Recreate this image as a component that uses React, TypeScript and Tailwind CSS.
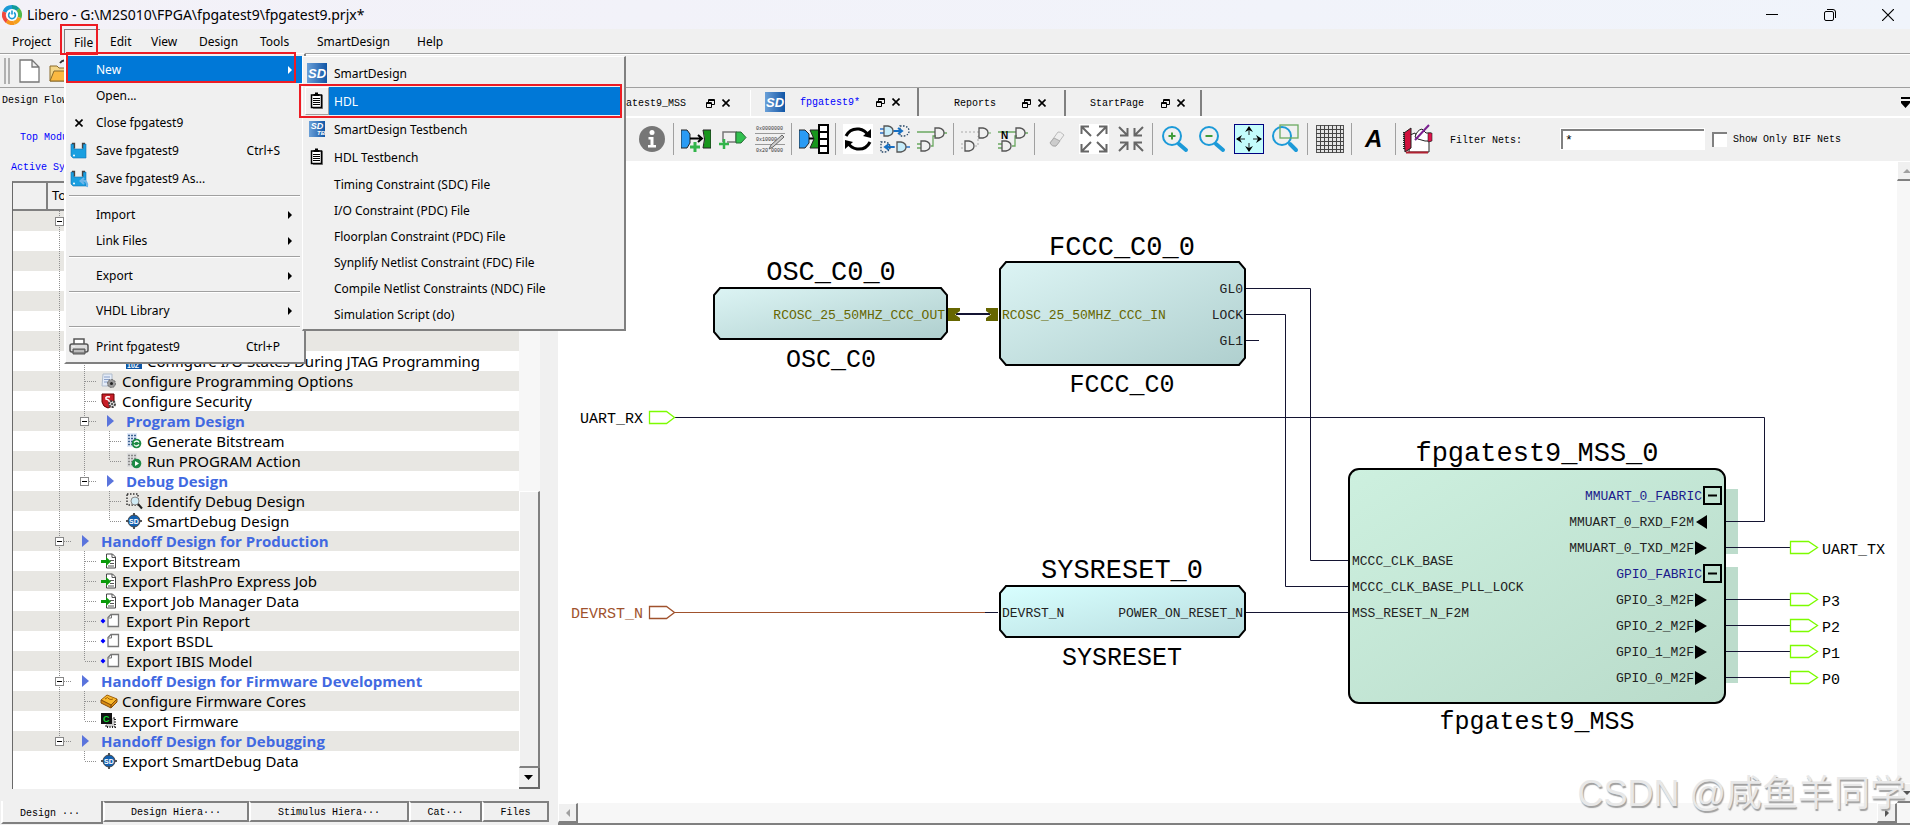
import { useState } from 'react'
import type { ReactNode } from 'react'

type Guide = 'blank' | 'line' | 'tee' | 'elbow' | 'box' | 'boxEnd' | 'boxTop'
type TreeIcon = 'io' | 'options' | 'security' | 'generate' | 'run' | 'identify' | 'smartdebug' | 'export' | 'page' | 'cores' | 'firmware'

interface TreeRow {
  guides: Guide[]
  label?: string
  group?: boolean
  icon?: TreeIcon
}

interface MenuEntry {
  label: string
  icon?: ReactNode
  shortcut?: string
  tall?: boolean
  arrow?: boolean
  separator?: boolean
}

const MONO = "font-['Liberation_Mono',monospace]"

const emptyRow: TreeRow = { guides: ['line'] }

const treeRows: TreeRow[] = [
  { guides: ['boxTop'] },
  emptyRow,
  emptyRow,
  emptyRow,
  emptyRow,
  emptyRow,
  emptyRow,
  { guides: ['line', 'line', 'blank'], label: 'Configure I/O States During JTAG Programming', icon: 'io' },
  { guides: ['line', 'tee'], label: 'Configure Programming Options', icon: 'options' },
  { guides: ['line', 'tee'], label: 'Configure Security', icon: 'security' },
  { guides: ['line', 'box'], label: 'Program Design', group: true },
  { guides: ['line', 'line', 'tee'], label: 'Generate Bitstream', icon: 'generate' },
  { guides: ['line', 'line', 'elbow'], label: 'Run PROGRAM Action', icon: 'run' },
  { guides: ['line', 'boxEnd'], label: 'Debug Design', group: true },
  { guides: ['line', 'blank', 'tee'], label: 'Identify Debug Design', icon: 'identify' },
  { guides: ['line', 'blank', 'elbow'], label: 'SmartDebug Design', icon: 'smartdebug' },
  { guides: ['box'], label: 'Handoff Design for Production', group: true },
  { guides: ['line', 'tee'], label: 'Export Bitstream', icon: 'export' },
  { guides: ['line', 'tee'], label: 'Export FlashPro Express Job', icon: 'export' },
  { guides: ['line', 'tee'], label: 'Export Job Manager Data', icon: 'export' },
  { guides: ['line', 'tee'], label: 'Export Pin Report', icon: 'page' },
  { guides: ['line', 'tee'], label: 'Export BSDL', icon: 'page' },
  { guides: ['line', 'elbow'], label: 'Export IBIS Model', icon: 'page' },
  { guides: ['box'], label: 'Handoff Design for Firmware Development', group: true },
  { guides: ['line', 'tee'], label: 'Configure Firmware Cores', icon: 'cores' },
  { guides: ['line', 'elbow'], label: 'Export Firmware', icon: 'firmware' },
  { guides: ['boxEnd'], label: 'Handoff Design for Debugging', group: true },
  { guides: ['blank', 'elbow'], label: 'Export SmartDebug Data', icon: 'smartdebug' },
]

function Logo() {
  return (
    <svg className="h-5 w-5" viewBox="0 0 20 20" fill="none" strokeWidth="4">
      <path d="M10 2 A8 8 0 0 0 2.5 7" stroke="#1b9ad6" />
      <path d="M2.5 7 A8 8 0 0 0 5 16.3" stroke="#f0483e" />
      <path d="M5 16.3 A8 8 0 0 0 12 17.8" stroke="#f7941d" />
      <path d="M12 17.8 A8 8 0 0 0 17.5 12.5" stroke="#f5a11c" />
      <path d="M17.5 12.5 A8 8 0 0 0 16 4.5" stroke="#52b848" />
      <path d="M16 4.5 A8 8 0 0 0 10 2" stroke="#0f9a9a" />
      <circle cx="10" cy="10" r="5.5" fill="#fff" />
      <path d="M8 7.5a3.4 3.4 0 1 0 4 0M10 5.5v4" stroke="#1b9ad6" strokeWidth="1.6" />
    </svg>
  )
}

function SdIcon({ small }: { small?: boolean }) {
  return (
    <span
      className={`flex flex-col items-center justify-center bg-gradient-to-r from-[#6aa0d8] to-[#0d56a6] font-['Liberation_Sans',sans-serif] font-bold italic text-white ${
        small ? 'h-4 w-4 text-[9px] leading-[8px]' : 'h-5 w-5 text-[13px] leading-none'
      }`}
    >
      <span>SD</span>
      {small && <span className="self-end text-[6px] leading-[6px]">TB</span>}
    </span>
  )
}

function ClipboardIcon() {
  return (
    <svg className="h-[18px] w-[14px]" viewBox="0 0 14 18">
      <path d="M3 3h10v14h-10z" fill="#888" />
      <path d="M1.500 3h10v12.500h-10z" fill="#fff" stroke="#000" strokeWidth="1.500" />
      <path d="M3.500 2h1.500V.5h3V2h1.500v2h-6z" fill="#000" />
      <path d="M3 6.500h7M3 8.500h7M3 10.500h7M3 12.500h7" stroke="#000" />
    </svg>
  )
}

function SaveIcon({ as }: { as?: boolean }) {
  return (
    <svg className="h-[18px] w-5" viewBox="0 0 20 18">
      <path d="M2 2h3v5h9V2h3v14H4l-2-2z" fill="#1a9fe0" stroke="#1273b4" strokeWidth=".6" />
      <path d="M3 1.500h2.500v5M16 1.500h-2.500v5" fill="none" stroke="#444" strokeWidth="1.300" />
      <circle cx="5" cy="13.500" r="1" fill="#fff" />
      {as && <path d="M13 11q6-1 5 6M15 8l-3.500 3 3.500 3" fill="none" stroke="#6fb5e8" strokeWidth="2" />}
    </svg>
  )
}

function PrinterIcon() {
  return (
    <svg className="h-[18px] w-5" viewBox="0 0 20 18" fill="none" stroke="#555">
      <path d="M5 7V1h10v6" fill="#fff" strokeWidth="1.500" />
      <rect x="1" y="6" width="18" height="8" rx="2" fill="#ddd" strokeWidth="1.500" />
      <path d="M4 11h12v5H4z" fill="#888" />
      <path d="M5 13h10M3 8.500h3" stroke="#eee" />
    </svg>
  )
}

const fileMenu: MenuEntry[] = [
  { label: 'Open...' },
  { label: 'Close fpgatest9', tall: true, icon: <svg className="h-2 w-2" viewBox="0 0 8 8"><path d="M.5.5l7 7M7.500.5l-7 7" stroke="#000" strokeWidth="1.600" /></svg> },
  { label: 'Save fpgatest9', tall: true, shortcut: 'Ctrl+S', icon: <SaveIcon /> },
  { label: 'Save fpgatest9 As...', tall: true, icon: <SaveIcon as /> },
  { label: 'Import', arrow: true, separator: true },
  { label: 'Link Files', arrow: true },
  { label: 'Export', arrow: true, separator: true },
  { label: 'VHDL Library', arrow: true, separator: true },
  { label: 'Print fpgatest9', tall: true, shortcut: 'Ctrl+P', separator: true, icon: <PrinterIcon /> },
]

const newMenu: MenuEntry[] = [
  { label: 'SmartDesign', tall: true, icon: <SdIcon /> },
  { label: 'HDL', tall: true, icon: <ClipboardIcon /> },
  { label: 'SmartDesign Testbench', tall: true, icon: <SdIcon small /> },
  { label: 'HDL Testbench', tall: true, icon: <ClipboardIcon /> },
  { label: 'Timing Constraint (SDC) File' },
  { label: 'I/O Constraint (PDC) File' },
  { label: 'Floorplan Constraint (PDC) File' },
  { label: 'Synplify Netlist Constraint (FDC) File' },
  { label: 'Compile Netlist Constraints (NDC) File' },
  { label: 'Simulation Script (do)' },
]

function Arrow({ className }: { className: string }) {
  return (
    <svg className={`h-2 w-1 ${className}`} viewBox="0 0 4 8">
      <path d="M0 0l4 4-4 4z" fill="currentColor" />
    </svg>
  )
}

function NewSubmenu() {
  return (
    <ul role="menu" className="absolute top-0 left-full -ml-0.5 w-[324px] border-t border-r-2 border-b-2 border-l border-t-white border-r-[#808080] border-b-[#808080] border-l-white bg-[#f0f0f0] py-0.5 text-black">
      {newMenu.map((item) => {
        const active = item.label === 'HDL'
        return (
          <li key={item.label} className="relative">
            <button role="menuitem" className={`flex w-full items-center text-left ${item.tall ? 'h-7' : 'h-[26px]'}`}>
              <span className={`ml-0.5 flex h-full w-6 items-center justify-center ${active ? 'border border-t-white border-r-[#a0a0a0] border-b-[#a0a0a0] border-l-white' : ''}`}>
                {item.icon}
              </span>
              <span className={`mr-0.5 flex h-full flex-1 items-center pt-0.5 pl-[5px] ${active ? 'bg-[#0078d7] text-white' : ''}`}>{item.label}</span>
            </button>
            {active && <span className="pointer-events-none absolute -inset-y-[3px] right-0.5 -left-1 border-2 border-[#ed1c24]" />}
          </li>
        )
      })}
    </ul>
  )
}

function FileMenu() {
  return (
    <ul role="menu" className="absolute top-6 left-0 z-20 w-[242px] border-t border-r-2 border-b-2 border-l-2 border-t-white border-r-[#808080] border-b-[#808080] border-l-white bg-[#f0f0f0] pt-0.5 pb-px">
      <li className="relative">
        <button role="menuitem" className="flex h-[27px] w-full items-center bg-[#0078d7] pr-3 pl-[30px] text-white">
          New
          <Arrow className="ml-auto" />
        </button>
        <span className="pointer-events-none absolute -top-1 right-2 bottom-0 left-0 z-10 border-2 border-[#ed1c24]" />
        <NewSubmenu />
      </li>
      {fileMenu.map((item) => (
        <li key={item.label}>
          {item.separator && <div className="mt-0.5 mr-1 mb-[5px] ml-[3px] border-t border-b border-t-[#a0a0a0] border-b-white" />}
          <button role="menuitem" className={`flex w-full items-center pr-3 text-left ${item.tall ? 'h-7' : 'h-[26px]'}`}>
            <span className="flex w-[30px] items-center justify-center pr-1">{item.icon}</span>
            <span>{item.label}</span>
            {item.shortcut && <span className="mr-3 ml-auto">{item.shortcut}</span>}
            {item.arrow && <Arrow className="ml-auto" />}
          </button>
        </li>
      ))}
    </ul>
  )
}

function MenuBar() {
  const [open, setOpen] = useState(true)
  return (
    <nav className="flex h-[25px] shrink-0 items-stretch border-b border-[#a0a0a0] text-[12px]">
      <button className="w-16 pt-0.5 pl-3 text-left">Project</button>
      <div className="relative w-9">
        <button onClick={() => setOpen(!open)} className="h-full w-full border-t border-l border-[#808080] pt-0.5 pl-[9px] text-left">
          File
        </button>
        {open && <FileMenu />}
        <span className="pointer-events-none absolute -top-[5px] right-0.5 -bottom-[2px] -left-1 z-30 border-2 border-[#ed1c24]" />
      </div>
      <button className="w-[41px] pt-0.5 pl-2.5 text-left">Edit</button>
      <button className="w-12 pt-0.5 pl-2.5 text-left">View</button>
      <button className="w-[61px] pt-0.5 pl-2.5 text-left">Design</button>
      <button className="w-[57px] pt-0.5 pl-2.5 text-left">Tools</button>
      <button className="w-[100px] pt-0.5 pl-2.5 text-left">SmartDesign</button>
      <button className="pt-0.5 pl-2.5 text-left">Help</button>
    </nav>
  )
}

function GuideCell({ kind }: { kind: Guide }) {
  const boxed = kind === 'box' || kind === 'boxEnd' || kind === 'boxTop'
  return (
    <svg className="h-5 w-[25px] shrink-0" viewBox="0 0 25 20" fill="none" stroke="#909090" strokeDasharray="1 1">
      {(kind === 'line' || kind === 'tee' || kind === 'box') && <path d="M12.500 0V20" />}
      {(kind === 'elbow' || kind === 'boxEnd') && <path d="M12.500 0V10" />}
      {kind === 'boxTop' && <path d="M12.500 0V20" />}
      {kind !== 'line' && kind !== 'blank' && <path d="M13 10.500H25" />}
      {boxed && (
        <g strokeDasharray="none">
          <rect x="8.500" y="6.500" width="8" height="8" fill="#fff" stroke="#888" />
          <path d="M10 10.500h5" stroke="#000" />
        </g>
      )}
    </svg>
  )
}

function RowIcon({ kind }: { kind: TreeIcon }) {
  return (
    <svg className="h-4 w-4 shrink-0" viewBox="0 0 16 16" fill="none">
      {kind === 'io' && (
        <>
          <rect y="2" width="16" height="14" fill="#0d56a6" />
          <text x="1" y="15" fontSize="7" fontWeight="bold" fill="#fff" fontFamily="Liberation Sans">10Z</text>
        </>
      )}
      {kind === 'options' && (
        <>
          <path d="M2 1h9v12H1z" fill="#e4ecf8" stroke="#b0bccc" />
          <path d="M3 4h6M3 6.500h6M3 9h4" stroke="#8aa0c8" />
          <circle cx="10.500" cy="10.500" r="4" fill="#999" stroke="#666" strokeDasharray="2 1" />
          <circle cx="10.500" cy="10.500" r="1.500" fill="#222" />
        </>
      )}
      {kind === 'security' && (
        <>
          <path d="M1 1h12v8q-1 5-6 6-5-1-6-6z" fill="#c81e28" stroke="#600" />
          <path d="M9 4q-5-1-4 2 4 1 3 3" stroke="#fff" strokeWidth="1.500" />
          <circle cx="11" cy="11" r="3" fill="#ddd" stroke="#444" strokeWidth="2" strokeDasharray="2 1" />
          <circle cx="11" cy="11" r="1" fill="#333" />
        </>
      )}
      {(kind === 'generate' || kind === 'run') && (
        <>
          <rect x="1" y="0" width="10" height="14" fill={kind === 'run' ? '#ddd' : '#dfe8f8'} />
          <path d="M2 2.500h8M2 5.500h8M2 8.500h8M2 11.500h4" stroke={kind === 'run' ? '#888' : '#3d6190'} strokeDasharray="2 1" strokeWidth="1.500" />
          <circle cx="10.500" cy="10.500" r="4.800" fill="#1c8a44" />
          {kind === 'run' ? <path d="M9 8l4 2.500L9 13z" fill="#fff" /> : <path d="M8 9.500q3-3 5 0M13 11.500q-3 3-5 0" stroke="#fff" strokeWidth="1.300" />}
        </>
      )}
      {kind === 'identify' && (
        <>
          <path d="M1 1h11v11H1z" stroke="#333" strokeWidth="1.500" strokeDasharray="1.500 1.500" />
          <circle cx="9" cy="8" r="4" fill="#cfeaf4" stroke="#888" />
          <path d="M12 11l4 4.500" stroke="#222" strokeWidth="2" />
        </>
      )}
      {kind === 'smartdebug' && (
        <>
          <path d="M8 0v16M0 8h16" stroke="#555" strokeWidth="2" />
          <circle cx="8" cy="8" r="6" fill="#1260b0" stroke="#444" />
          <text x="3" y="11" fontSize="7" fontWeight="bold" fill="#fff" fontFamily="Liberation Sans">SD</text>
        </>
      )}
      {kind === 'export' && (
        <>
          <path d="M5.500 1h6l3 3v11h-9z" fill="#fff" stroke="#444" />
          <path d="M11 1v3.500h3.500M9 7.500h4M9 10.500h4M7 13h6" stroke="#555" />
          <path d="M0 7h5V4l5 4.500L5 13v-3H0z" fill="#0a9a0a" />
        </>
      )}
      {kind === 'page' && (
        <>
          <path d="M-.5 8L2 5.500 4.500 8 2 10.500z" fill="#00f" />
          <path d="M10 1.500h7.500v12H7v-9z" fill="#fff" stroke="#777" strokeWidth="1.300" />
          <path d="M10.500 2v3H7.500" stroke="#777" />
        </>
      )}
      {kind === 'cores' && (
        <>
          <path d="M0 7l6-5 10 4-6 6z" fill="#f8b82c" stroke="#a06008" />
          <path d="M0 7v3l10 5v-3zM10 12l6-6v3l-6 6z" fill="#d88a10" stroke="#8a5008" />
          <path d="M4 6q3-3 4 0 2 1 4 0" stroke="#a06008" />
        </>
      )}
      {kind === 'firmware' && (
        <>
          <path d="M5 5h9v9H5z" fill="#ccc" stroke="#222" strokeWidth="2" strokeDasharray="1 1.500" />
          <rect width="11" height="11" fill="#111" />
          <text x="2" y="9" fontSize="9" fontWeight="bold" fill="#1d3" fontFamily="Liberation Sans">C</text>
        </>
      )}
    </svg>
  )
}

function DesignTree() {
  return (
    <div className="mx-3 flex flex-1 flex-col border-t-2 border-l border-t-[#808080] border-l-[#696969] bg-white">
      <div className="flex h-7 shrink-0 border-b-2 border-[#808080] bg-[#f0f0f0] text-[13px]">
        <span className="w-[35px] border-r-2 border-[#808080]" />
        <span className="flex items-center pl-1">Tool</span>
      </div>
      <div className="flex flex-1">
        <ul className="flex-1">
          {treeRows.map((row, i) => (
            <li key={i} className={`flex h-5 items-center pl-[34px] text-[15px] leading-5 whitespace-nowrap ${i % 2 === 0 ? 'bg-[#e8e7e3]' : 'bg-white'}`}>
              {row.guides.map((kind, j) => (
                <GuideCell key={j} kind={kind} />
              ))}
              {row.group && (
                <svg className="mr-[11px] ml-2.5 h-3 w-2 shrink-0" viewBox="0 0 8 12">
                  <path d="M0 0l7 6-7 6z" fill="#5a74dc" />
                </svg>
              )}
              {row.icon && (
                <span className={`ml-1 shrink-0 [&>svg]:overflow-visible ${row.icon === 'page' ? 'mr-[9px]' : 'mr-[5px]'}`}>
                  <RowIcon kind={row.icon} />
                </span>
              )}
              <span className={row.group ? "font-['Open_Sans',sans-serif] font-bold text-[#4169e1]" : ''}>{row.label}</span>
            </li>
          ))}
        </ul>
        <div className="flex w-[21px] flex-col bg-[#f7f7f7]">
          <div className="h-[280px]" />
          <div className="flex-1 border-t border-r-2 border-b-2 border-l border-t-white border-r-[#808080] border-b-[#808080] border-l-white bg-[#f0f0f0]" />
          <button aria-label="Scroll down" className="flex h-[21px] items-center justify-center border-r-2 border-b-2 border-[#696969] bg-[#f0f0f0]">
            <svg className="h-[5px] w-[9px]" viewBox="0 0 9 5"><path d="M0 0h9L4.500 5z" /></svg>
          </button>
        </div>
      </div>
    </div>
  )
}

function LeftDock() {
  const tabs = [
    { label: 'Design Hiera···', width: 'w-[146px]' },
    { label: 'Stimulus Hiera···', width: 'w-40' },
    { label: 'Cat···', width: 'w-[73px]' },
    { label: 'Files', width: 'w-[67px]' },
  ]
  return (
    <aside className="flex w-[552px] shrink-0 flex-col">
      <h2 className={`h-[42px] pt-[5px] pl-0.5 text-[10px] ${MONO}`}>Design Flow</h2>
      <p className={`h-[30px] pl-5 text-[10px] text-[#0000ff] ${MONO}`}>Top Module</p>
      <p className={`h-[21px] pl-[11px] text-[10px] text-[#0000ff] ${MONO}`}>Active Synthesis</p>
      <DesignTree />
      <div className={`mt-3 flex h-6 items-start text-[10px] ${MONO}`}>
        <button className="ml-px h-[23px] w-[102px] border-r-2 border-b-2 border-l-2 border-r-[#808080] border-b-[#808080] border-l-white pt-1 pr-1">Design ···</button>
        {tabs.map((tab) => (
          <button key={tab.label} className={`h-[21px] border-2 border-t-[#808080] border-r-[#808080] border-b-[#808080] border-l-white pt-0.5 ${tab.width}`}>
            {tab.label}
          </button>
        ))}
      </div>
    </aside>
  )
}

function DetachIcon() {
  return (
    <svg className="h-[9px] w-[9px]" viewBox="0 0 9 9" fill="#f0f0f0" stroke="#000">
      <path d="M2.500.5h6v5h-6zM2.500 1.500h6" />
      <path d="M.5 3.500h5v5h-5zM.5 4.500h5" />
    </svg>
  )
}

function TabButtons() {
  return (
    <span className="flex items-center gap-[7px]">
      <button aria-label="Detach"><DetachIcon /></button>
      <button aria-label="Close">
        <svg className="h-2 w-2" viewBox="0 0 8 8"><path d="M.5.5l7 7M7.500.5l-7 7" stroke="#000" strokeWidth="1.600" /></svg>
      </button>
    </span>
  )
}

function EditorTabs() {
  return (
    <div className={`flex h-[29px] shrink-0 items-stretch border-b border-white text-[10px] ${MONO}`}>
      <div className="mt-0.5 flex w-[193px] items-center gap-5 border-r border-white pl-[50px]">
        fpgatest9_MSS <TabButtons />
      </div>
      <div className="flex w-[168px] items-center border-r-2 border-[#808080] pl-3.5">
        <SdIcon />
        <span className="mr-4 ml-[15px] text-[#0000ff]">fpgatest9*</span>
        <TabButtons />
      </div>
      <div className="mt-0.5 flex w-[147px] items-center border-r-2 border-[#808080] pl-[35px]">
        <span className="mr-[26px]">Reports</span>
        <TabButtons />
      </div>
      <div className="mt-0.5 flex w-[136px] items-center border-r-2 border-[#808080] pl-6">
        <span className="mr-[17px]">StartPage</span>
        <TabButtons />
      </div>
      <button aria-label="Tab list" className="ml-auto">
        <svg className="h-[11px] w-[9px]" viewBox="0 0 9 11"><path d="M0 0h9v2H0zM0 4h9v2L4.500 11 0 6z" /></svg>
      </button>
    </div>
  )
}

function Tool({ label, children }: { label: string; children: ReactNode }) {
  return (
    <button aria-label={label} className="flex w-[37px] shrink-0 items-center justify-center">
      <svg className="h-[30px] w-[30px]" viewBox="0 0 30 30" fill="none">{children}</svg>
    </button>
  )
}

function Divider() {
  return <span className="mx-[3px] h-8 w-px shrink-0 bg-[#a0a0a0]" />
}

function Gate({ x, y, fill = 'none', dashed }: { x: number; y: number; fill?: string; dashed?: boolean }) {
  return <path d={`M${x} ${y}h4q5 1 5 5t-5 5h-4z`} fill={fill} stroke={dashed ? '#246' : '#555'} strokeWidth="1.300" strokeDasharray={dashed ? '1.500 1.500' : undefined} />
}

function CanvasToolbar() {
  return (
    <div className={`flex h-[44px] shrink-0 items-center border-t border-white pb-px pl-[75px] text-[10px] ${MONO}`}>
      <Tool label="Info">
        <circle cx="15" cy="15" r="13" fill="#767676" />
        <circle cx="15" cy="8.500" r="2.500" fill="#fff" />
        <path d="M11.500 13h5v8h2.500v2.500h-8V21h2.500v-5.500h-2z" fill="#fff" />
      </Tool>
      <Divider />
      <Tool label="Connect">
        <path d="M0 6h6l3 4v9l-3 5H0z" fill="#2a9bf4" stroke="#222" />
        <path d="M22 6h8v18h-8q3-9 0-18z" fill="#18961c" stroke="#222" />
        <path d="M9 14.500h12M17 11l4 3.500-4 3.500" stroke="#000" strokeWidth="2" />
        <path d="M14 18v10M9 23h10" stroke="#32b44a" strokeWidth="3" />
      </Tool>
      <Tool label="Add port">
        <path d="M5 18V8h13v10H9" stroke="#777" strokeWidth="1.500" />
        <path d="M18 8h5l5 5.500-5 5.500h-5z" fill="#30c04e" stroke="#276a35" />
        <path d="M6 15v10M1 20h10" stroke="#32b44a" strokeWidth="2.500" />
      </Tool>
      <Tool label="Memory map">
        <text x="1" y="6" fontSize="5" fill="#333">0x0000000</text>
        <text x="1" y="17" fontSize="5" fill="#333">0x10000</text>
        <text x="1" y="28" fontSize="5" fill="#333">0x20 0000</text>
        <path d="M0 9.500h30M0 20.500h30" stroke="#999" />
        <path d="M14 25l2-4 11-10 2 2-11 10z" fill="#ccc" stroke="#666" />
      </Tool>
      <Divider />
      <Tool label="Bus interface">
        <path d="M0 6h6l4 4v9l-4 5H0z" fill="#2a9bf4" stroke="#222" />
        <path d="M10 14.500h5" stroke="#000" strokeWidth="2" />
        <path d="M11 6h9v18h-9l4-9z" fill="#18961c" stroke="#222" />
        <path d="M20 1h9v28h-9zM20 8h9M20 15h9M20 22h9" fill="#fff" stroke="#000" strokeWidth="2" />
      </Tool>
      <Divider />
      <Tool label="Refresh">
        <rect width="30" height="30" fill="#fff" />
        <path d="M3 12q4-8 13-7 6 1 9 6M27 18q-4 8-13 7-6-1-9-6" stroke="#000" strokeWidth="3" />
        <path d="M28 5v9l-8-2zM2 25v-9l8 2z" fill="#000" />
      </Tool>
      <Tool label="Reconnect gates">
        <path d="M0 5h4M0 9h4M13 7h6M26 23h4M9 23h6" stroke="#2a72c8" strokeWidth="1.500" />
        <Gate x={4} y={2} fill="#c6ecfa" />
        <Gate x={20} y={2} dashed />
        <path d="M14 7h7M18 4l4 3-4 3M14 23H6M9 20l-4 3 4 3" stroke="#1670c4" strokeWidth="2" />
        <Gate x={17} y={18} fill="#c6ecfa" />
        <Gate x={1} y={18} dashed />
      </Tool>
      <Tool label="Route nets">
        <path d="M0 8h18M14 22h2V12h3M0 20h4M0 24h4M27 9h3" stroke="#6aa860" strokeWidth="1.300" />
        <Gate x={18} y={4} />
        <Gate x={4} y={17} />
      </Tool>
      <Divider />
      <Tool label="Hide nets">
        <path d="M0 8h18M14 22h3V12h2M0 20h4M0 24h4" stroke="#aaa" strokeDasharray="2 2" />
        <path d="M27 9h3" stroke="#6aa860" />
        <Gate x={18} y={4} />
        <Gate x={4} y={17} />
      </Tool>
      <Tool label="Name nets">
        <path d="M0 8h18M14 22h3V12h2M0 20h4M0 24h4M27 9h3" stroke="#6aa860" strokeWidth="1.300" />
        <Gate x={18} y={4} />
        <Gate x={4} y={17} />
        <text x="3" y="15" fontSize="10" fontWeight="bold" fill="#000" fontFamily="Liberation Sans">N</text>
      </Tool>
      <Divider />
      <Tool label="Erase">
        <path d="M8 19l8-11q2-1 6 3L14 22q-4 1-6-3z" fill="#eee" stroke="#bbb" />
        <path d="M8 19l4-5 6 3-4 5q-4 1-6-3z" fill="#ccc" stroke="#aaa" />
      </Tool>
      <Tool label="Expand">
        <rect width="30" height="30" fill="#fff" />
        <path d="M12 12L3 3M2.500 10V2.500H10M18 12l9-9M20 2.500h7.500V10M12 18l-9 9M2.500 20v7.500H10M18 18l9 9M20 27.500h7.500V20" stroke="#666" strokeWidth="2" />
      </Tool>
      <Tool label="Collapse">
        <path d="M3 3l8 8M11.500 4v7.500H4M27 3l-8 8M18.500 4v7.500H26M3 27l8-8M4 18.500h7.500V26M27 27l-8-8M26 18.500h-7.500V26" stroke="#666" strokeWidth="2" />
      </Tool>
      <Divider />
      <Tool label="Zoom in">
        <path d="M19 20l7 6" stroke="#1c9ad8" strokeWidth="4" strokeLinecap="round" />
        <circle cx="12" cy="12" r="9" stroke="#1c9ad8" strokeWidth="2" />
        <path d="M12 8.500v7M8.500 12h7" stroke="#3f9c3a" strokeWidth="2" />
      </Tool>
      <Tool label="Zoom out">
        <path d="M19 20l7 6" stroke="#1c9ad8" strokeWidth="4" strokeLinecap="round" />
        <circle cx="12" cy="12" r="9" stroke="#1c9ad8" strokeWidth="2" />
        <path d="M8.500 12h7" stroke="#3f9c3a" strokeWidth="2" />
      </Tool>
      <Tool label="Fit to window">
        <rect x=".5" y=".5" width="29" height="29" fill="#c4fcfc" stroke="#000080" />
        <path d="M15 3v24M3 15h24" stroke="#222" strokeDasharray="8 8" />
        <path d="M15 2l4 6-4-2-4 2zM15 28l4-6-4 2-4-2zM2 15l6-4-2 4 2 4zM28 15l-6-4 2 4-2 4z" fill="#000" />
      </Tool>
      <Tool label="Zoom to area">
        <path d="M19 20l6 6" stroke="#1c9ad8" strokeWidth="4" strokeLinecap="round" />
        <circle cx="11" cy="12" r="9" stroke="#1c9ad8" strokeWidth="2" />
        <rect x="9" y="1" width="18" height="13" stroke="#6aaa60" strokeWidth="1.300" />
      </Tool>
      <Divider />
      <Tool label="Grid">
        <rect x="1.500" y="1.500" width="27" height="27" fill="#e4e4e4" stroke="#555" />
        <path d="M5.500 1v28M9.500 1v28M13.500 1v28M17.500 1v28M21.500 1v28M25.500 1v28M1 5.500h28M1 9.500h28M1 13.500h28M1 17.500h28M1 21.500h28M1 25.500h28" stroke="#444" />
      </Tool>
      <Divider />
      <Tool label="Text">
        <text x="6" y="23" fontSize="24" fontWeight="bold" fontStyle="italic" fill="#000" fontFamily="Liberation Sans">A</text>
      </Tool>
      <Divider />
      <Tool label="Notes">
        <path d="M7 11l5-2 3 6 8-3 3 4v12H6z" fill="#fff" stroke="#222" />
        <path d="M1 9l7-5v20l-6 4z" fill="#d0103c" stroke="#222" />
        <path d="M1 8v18" stroke="#222" strokeWidth="2" strokeDasharray="1 1" />
        <path d="M3 28.500h22" stroke="#b02030" strokeWidth="2" />
        <path d="M12 13q2-7 7-8l4 4h5v8h-6l-7-2z" fill="#fff" stroke="#222" />
        <path d="M25 9h4v8l-4 1z" fill="#e0144c" stroke="#222" strokeWidth=".6" />
        <path d="M26 1L12 16" stroke="#7a2090" strokeWidth="2" />
      </Tool>
      <label htmlFor="filter-nets" className="ml-3.5 w-[111px] shrink-0 pt-0.5">Filter Nets:</label>
      <input id="filter-nets" defaultValue="*" className="h-5 w-[143px] border-t-2 border-l-2 border-[#808080] bg-white px-0.5 text-[13px] outline-1 outline-white" />
      <input id="bif-nets" type="checkbox" className="ml-2 h-[15px] w-[15px] appearance-none border-t-2 border-l-2 border-[#808080] bg-white" />
      <label htmlFor="bif-nets" className="ml-1.5">Show Only BIF Nets</label>
    </div>
  )
}

function OutPort({ y, label }: { y: number; label: string }) {
  return (
    <g>
      <path d={`M1726 ${y}H1790`} stroke="#141432" />
      <path d={`M1790.500 ${y - 6}h18l9 6-9 6h-18z`} fill="none" stroke="#7cfc00" strokeWidth="1.300" />
      <text x="1822" y={y + 6} className="text-[15px]">{label}</text>
    </g>
  )
}

function Schematic() {
  const fabricPins = [
    { y: 527, label: 'MMUART_0_RXD_F2M', input: true },
    { y: 553, label: 'MMUART_0_TXD_M2F' },
    { y: 605, label: 'GPIO_3_M2F' },
    { y: 631, label: 'GPIO_2_M2F' },
    { y: 657, label: 'GPIO_1_M2F' },
    { y: 683, label: 'GPIO_0_M2F' },
  ]
  return (
    <svg className={`h-[641px] w-[1339px] shrink-0 ${MONO}`} viewBox="558 161 1339 641" fill="#000">
      <defs>
        <linearGradient id="teal" x1="0" y1="0" x2="1" y2="1">
          <stop offset="0" stopColor="#dcf4f4" />
          <stop offset="1" stopColor="#afcfce" />
        </linearGradient>
        <linearGradient id="cyan" x1="0" y1="0" x2="1" y2="1">
          <stop offset="0" stopColor="#d8ffff" />
          <stop offset="1" stopColor="#b8dcde" />
        </linearGradient>
        <linearGradient id="mint" x1="0" y1="0" x2="1" y2="1">
          <stop offset="0" stopColor="#cdf0df" />
          <stop offset="1" stopColor="#b9dbca" />
        </linearGradient>
      </defs>

      {/* Nets */}
      <g fill="none" stroke="#141432">
        <path d="M675 417.500H1764.500V521.500H1726" />
        <path d="M1246 288.500H1310.500V560.500H1348" />
        <path d="M1246 314.500H1285.500V586.500H1348" />
        <path d="M1246 340.500H1259M1246 612.500H1348M985 612.500H998" />
        <path d="M675 612.500H985" stroke="#a0522d" />
        <path d="M956 314H990" strokeWidth="2" />
      </g>

      {/* Oscillator */}
      <path d="M720 288h221l6 7v37l-6 7H720l-6-7v-37z" fill="url(#teal)" stroke="#000" strokeWidth="2" />
      <path d="M948 308h12v3l-5 3.500 5 3.500v3h-12zM998 308h-12v3l5 3.500-5 3.500v3h12z" fill="#666600" />
      <text x="831" y="280" textAnchor="middle" className="text-[27px]">OSC_C0_0</text>
      <text x="831" y="367" textAnchor="middle" className="text-[25px]">OSC_C0</text>
      <text x="945" y="319" textAnchor="end" className="text-[13px]" fill="#666600">RCOSC_25_50MHZ_CCC_OUT</text>

      {/* Clock conditioning */}
      <path d="M1006 262h233l6 7v89l-6 7h-233l-6-7v-89z" fill="url(#teal)" stroke="#000" strokeWidth="2" />
      <text x="1122" y="255" textAnchor="middle" className="text-[27px]">FCCC_C0_0</text>
      <text x="1122" y="392" textAnchor="middle" className="text-[25px]">FCCC_C0</text>
      <g className="text-[13px]" fill="#222">
        <text x="1002" y="319" fill="#666600">RCOSC_25_50MHZ_CCC_IN</text>
        <text x="1243" y="293" textAnchor="end">GL0</text>
        <text x="1243" y="319" textAnchor="end">LOCK</text>
        <text x="1243" y="345" textAnchor="end">GL1</text>
      </g>

      {/* Input ports */}
      <text x="580" y="423" className="text-[15px]">UART_RX</text>
      <path d="M649.500 411.500h17l8 6-8 6h-17z" fill="none" stroke="#7cfc00" strokeWidth="1.300" />
      <text x="571" y="618" className="text-[15px]" fill="#a0522d">DEVRST_N</text>
      <path d="M649.500 606.500h17l8 6-8 6h-17z" fill="none" stroke="#a0522d" strokeWidth="1.300" />

      {/* Reset */}
      <path d="M1006 586h233l6 7v37l-6 7h-233l-6-7v-37z" fill="url(#cyan)" stroke="#000" strokeWidth="2" />
      <text x="1122" y="578" textAnchor="middle" className="text-[27px]">SYSRESET_0</text>
      <text x="1122" y="665" textAnchor="middle" className="text-[25px]">SYSRESET</text>
      <g className="text-[13px]" fill="#222">
        <text x="1002" y="617">DEVRST_N</text>
        <text x="1243" y="617" textAnchor="end">POWER_ON_RESET_N</text>
      </g>

      {/* Microcontroller subsystem */}
      <path d="M1726 489h12v65h-12zM1726 567h12v116h-12z" fill="#bddccc" />
      <path d="M1726 521.500h13" stroke="#141432" />
      <rect x="1349" y="469" width="376" height="234" rx="10" fill="url(#mint)" stroke="#000" strokeWidth="2" />
      <text x="1537" y="461" textAnchor="middle" className="text-[27px]">fpgatest9_MSS_0</text>
      <text x="1537" y="729" textAnchor="middle" className="text-[25px]">fpgatest9_MSS</text>
      <g className="text-[13px]" fill="#222">
        <text x="1352" y="565">MCCC_CLK_BASE</text>
        <text x="1352" y="591">MCCC_CLK_BASE_PLL_LOCK</text>
        <text x="1352" y="617">MSS_RESET_N_F2M</text>
        <text x="1702" y="500" textAnchor="end" fill="#1c1c8c">MMUART_0_FABRIC</text>
        <text x="1702" y="578" textAnchor="end" fill="#1c1c8c">GPIO_FABRIC</text>
        {fabricPins.map((pin) => (
          <g key={pin.label}>
            <text x="1694" y={pin.y - 1} textAnchor="end">{pin.label}</text>
            <path d={pin.input ? `M1707 ${pin.y - 12}v14l-11-7z` : `M1695 ${pin.y - 12}v14l12-7z`} fill="#000" />
          </g>
        ))}
      </g>
      <path d="M1704 487h17v17h-17zM1708 495.500h9M1704 565h17v17h-17zM1708 573.500h9" fill="none" stroke="#000" strokeWidth="2" />

      {/* Output ports */}
      <OutPort y={547.5} label="UART_TX" />
      <OutPort y={599.5} label="P3" />
      <OutPort y={625.5} label="P2" />
      <OutPort y={651.5} label="P1" />
      <OutPort y={677.5} label="P0" />
    </svg>
  )
}

function ScrollButton({ label, d, disabled }: { label: string; d: string; disabled?: boolean }) {
  return (
    <button aria-label={label} className="flex h-5 w-5 shrink-0 items-center justify-center border-t border-r-2 border-b-2 border-l border-t-white border-r-[#808080] border-b-[#808080] border-l-white bg-[#f0f0f0]">
      <svg className="h-2 w-2" viewBox="0 0 8 8"><path d={d} fill={disabled ? '#a0a0a0' : '#555'} /></svg>
    </button>
  )
}

function Editor() {
  return (
    <main className="ml-[6px] flex min-w-0 flex-1 flex-col">
      <EditorTabs />
      <CanvasToolbar />
      <div className="flex min-h-0 flex-1">
        <div className="flex min-w-0 flex-1 overflow-hidden bg-white">
          <Schematic />
        </div>
        <div className="flex w-[13px] shrink-0 flex-col justify-between overflow-hidden bg-[#f7f7f7]">
          <ScrollButton label="Scroll up" d="M0 6L4 2l4 4z" disabled />
          <ScrollButton label="Scroll down" d="M0 2l4 4 4-4z" />
        </div>
      </div>
      <div className="flex h-[22px] shrink-0 items-start justify-between border-b-2 border-[#808080] bg-[#f7f7f7] pr-[13px]">
        <ScrollButton label="Scroll left" d="M6 0L2 4l4 4z" disabled />
        <ScrollButton label="Scroll right" d="M2 0l4 4-4 4z" />
      </div>
    </main>
  )
}

export default function App() {
  return (
    <div className="relative flex h-screen flex-col overflow-hidden bg-[#f0f0f0] font-['Noto_Sans',sans-serif] text-[12px] text-black">
      {/* Title bar */}
      <header className="flex h-[29px] shrink-0 items-center bg-gradient-to-r from-[#f3f1f8] to-[#f0f4fb] pr-4 pl-0.5">
        <Logo />
        <h1 className="ml-[5px] text-[14px] leading-5">Libero - G:\M2S010\FPGA\fpgatest9\fpgatest9.prjx*</h1>
        <div className="ml-auto flex items-center gap-[46px]">
          <button aria-label="Minimize"><svg className="h-3 w-3" viewBox="0 0 12 12"><path d="M0 5.500h12" stroke="#000" /></svg></button>
          <button aria-label="Restore">
            <svg className="h-3 w-3" viewBox="0 0 12 12" fill="none" stroke="#000">
              <rect x=".5" y="2.500" width="9" height="9" rx="1.500" />
              <path d="M3 .5h6q2.500 0 2.500 2.500v6" />
            </svg>
          </button>
          <button aria-label="Close"><svg className="h-3 w-3" viewBox="0 0 12 12"><path d="M0 0l12 12M12 0L0 12" stroke="#000" strokeWidth="1.200" /></svg></button>
        </div>
      </header>

      <MenuBar />

      {/* Main toolbar */}
      <div className="flex h-[34px] shrink-0 items-center gap-2 border-t border-b border-t-white border-b-[#a0a0a0] pl-1">
        <span className="mr-px h-[26px] w-1.5 border-r-2 border-l-2 border-[#b0b0b0]" />
        <button aria-label="New project">
          <svg className="h-6 w-[22px]" viewBox="0 0 22 24"><path d="M1 1h12l7 7v15H1zM13 1v7h7" fill="#fff" stroke="#777" strokeWidth="1.300" /></svg>
        </button>
        <button aria-label="Open project">
          <svg className="h-6 w-6" viewBox="0 0 24 24">
            <path d="M1 22V7h7l2 2h10v13z" fill="#f3d689" stroke="#8a6a2a" />
            <path d="M1 22l4-10h18l-4 10z" fill="#fbb941" stroke="#8a6a2a" />
            <path d="M11 4q4-5 8 0" fill="none" stroke="#333" strokeWidth="2" />
          </svg>
        </button>
      </div>

      <div className="flex min-h-0 flex-1">
        <LeftDock />
        <Editor />
      </div>

      <div className="pointer-events-none absolute right-1 bottom-1 z-40 font-['Liberation_Sans','Noto_Sans_CJK_SC',sans-serif] text-[36px] leading-[54px] whitespace-nowrap text-[#e8e8e8] [text-shadow:1px_2px_1px_#a0a0a0]">
        CSDN @咸鱼羊同学
      </div>
    </div>
  )
}
